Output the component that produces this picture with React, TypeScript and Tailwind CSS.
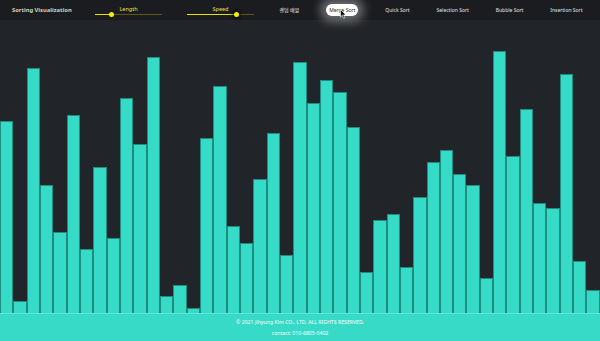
import React from "react"

const tops = [
  121, 301, 68, 185, 232, 115, 249, 167, 238, 98, 144, 57, 296, 285, 308,
  138, 86, 226, 243, 179, 133, 255, 62, 103, 80, 92, 127, 272, 220, 214,
  267, 197, 162, 150, 174, 185, 278, 51, 156, 109, 203, 208, 74, 261, 290,
]
const bars = tops.map((t) => 313 - t)

const menu = ["랜덤 배열", "Merge Sort", "Quick Sort", "Selection Sort", "Bubble Sort", "Insertion Sort"]

function Slider({ label, value, glow }: { label: string; value: number; glow?: boolean }) {
  return (
    <div className="relative w-[67px] h-[20px]">
      <div className="absolute left-0 right-0 top-[6px] text-center text-[5.5px] leading-[7px] text-[#e8e24a]">
        {label}
      </div>
      <div className="absolute left-0 right-0 top-[14px] h-px bg-[#5c5a12]" />
      <div className="absolute left-0 top-[14px] h-px bg-[#e6e300]" style={{ width: value }} />
      <div
        className={
          "absolute top-[12px] w-[5px] h-[5px] rounded-full bg-[#f5f000] " +
          (glow ? "shadow-[0_0_3px_2px_rgba(0,0,0,0.6)]" : "")
        }
        style={{ left: value - 2.5 }}
      />
    </div>
  )
}

export default function App() {
  return (
    <div
      className="w-[600px] h-[341px] flex flex-col bg-[#212428] overflow-hidden"
      style={{ fontFamily: '"Noto Sans", "Noto Sans CJK KR", sans-serif' }}
    >
      <header className="h-[20px] flex items-center bg-[#1b1c20] shrink-0">
        <div className="w-[95px] pl-[12px] text-[5.8px] font-bold text-[#d6d1b8] whitespace-nowrap">
          Sorting Visualization
        </div>
        <Slider label="Length" value={16} />
        <div className="w-[25px]" />
        <Slider label="Speed" value={49} glow />
        <div className="flex-1 flex items-center justify-around pl-[12px] pr-[4px]">
          {menu.map((m) =>
            m === "Merge Sort" ? (
              <div key={m} className="relative flex">
                <span className="block px-[3px] py-[2.5px] rounded-full bg-white text-[#1b1c20] text-[5px] leading-[7px] whitespace-nowrap shadow-[0_0_10px_6px_rgba(255,255,255,0.35)]">
                  {m}
                </span>
                <svg className="absolute left-[14px] top-[5px]" width="7" height="10" viewBox="0 0 7 10">
                  <path d="M0.5 0.5 L0.5 8 L2.3 6.3 L3.6 9.3 L4.8 8.8 L3.6 5.9 L6 5.9 Z" fill="#111" stroke="#fff" strokeWidth="0.6" />
                </svg>
              </div>
            ) : (
              <span key={m} className="text-[5px] leading-[7px] text-[#e4e4e4] whitespace-nowrap">
                {m}
              </span>
            )
          )}
        </div>
      </header>
      <main className="flex-1 flex items-end">
        {bars.map((h, i) => (
          <div
            key={i}
            className="flex-1 bg-[#36dbc7] border border-b-0 border-[#1f8e80]"
            style={{ height: h }}
          />
        ))}
      </main>
      <footer className="h-[28px] shrink-0 bg-[#36dac6] border-t border-[#5fe4d5] flex flex-col items-center justify-center gap-[4px] text-white text-[5.2px] leading-[7px]">
        <div>© 2021 Jihyung Kim CO., LTD. ALL RIGHTS RESERVED.</div>
        <div>contact: 010-6805-0402</div>
      </footer>
    </div>
  )
}
